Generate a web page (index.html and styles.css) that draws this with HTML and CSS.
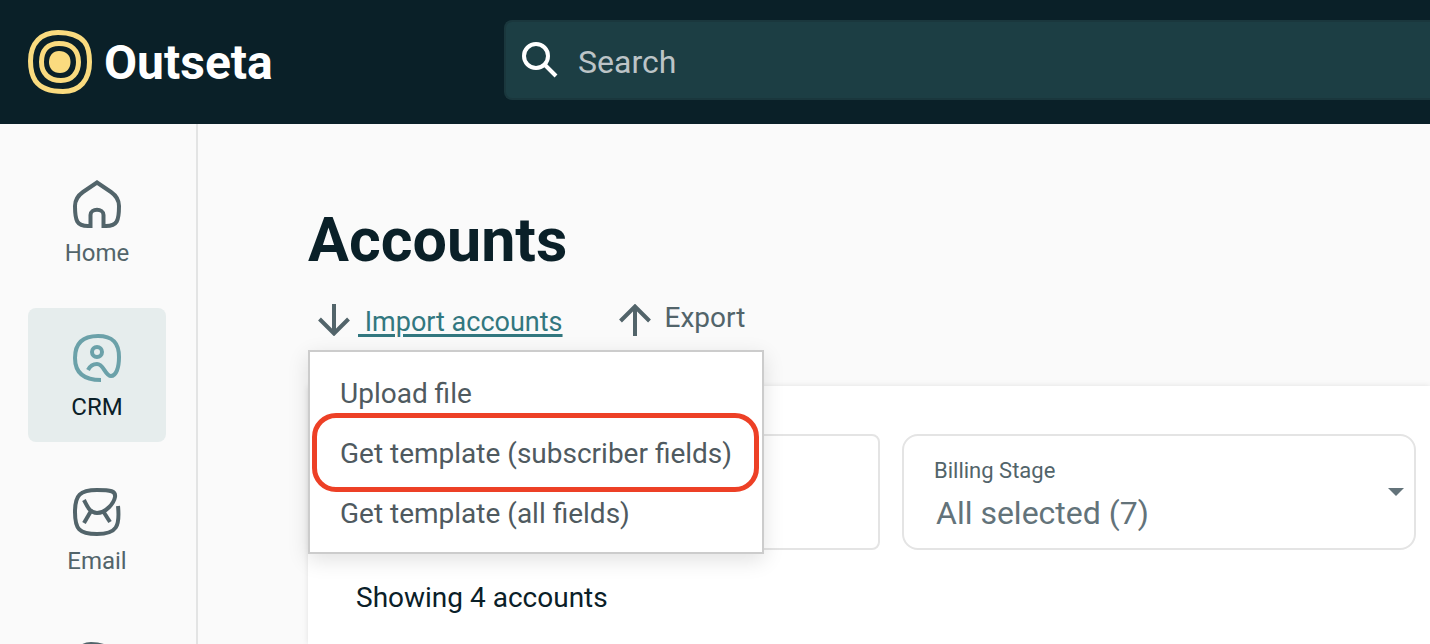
FILE: index.html
```html
<!DOCTYPE html>
<html lang="en">
<head>
    <meta charset="UTF-8">
    <meta name="viewport" content="width=device-width, initial-scale=1.0">
    <title>Accounts - Outseta</title>
    <link rel="stylesheet" href="styles.css">
</head>
<body>
    <header class="topbar">
        <a class="logo" href="#">
            <svg width="64" height="64" viewBox="0 0 64 64" fill="none" stroke="#fadb7f" stroke-width="5">
                <path d="M30 2.500C42 2.500 51 5.500 56.500 12C60.500 17 61.500 25 61.500 32C61.500 50 52 61.500 35 61.500C22 61.500 13 58.500 7.500 51C3.500 45 2.500 38 2.500 31C2.500 13 13 2.500 30 2.500Z"/>
                <path d="M31 13.500C43 13.500 50.500 20 50.500 32C50.500 43 44 50.500 33 50.500C21 50.500 13.500 43.500 13.500 32C13.500 20 20 13.500 31 13.500Z"/>
                <path fill="#fadb7f" stroke="none" d="M31 21C38 21 42.500 25 42.500 32C42.500 38.500 38.500 43 32 43C25 43 21 38.500 21 32C21 25.500 25 21 31 21Z"/>
            </svg>
            <span>Outseta</span>
        </a>
        <div class="search">
            <svg width="36" height="36" viewBox="0 0 36 36" fill="none" stroke="#fff" stroke-width="4">
                <circle cx="14" cy="14" r="12"/>
                <path d="M22.500 22.500L34 34"/>
            </svg>
            <input type="text" placeholder="Search" aria-label="Search">
        </div>
    </header>

    <div class="layout">
        <nav class="sidebar">
            <a class="nav-item" href="#">
                <svg class="nav-icon" viewBox="0 0 48 48">
                    <path d="M24 2.500L38 12C43 15.500 46 19 46 26C46 41 44 46 33 46H30.500V35C30.500 28 17.500 28 17.500 35V46H15C4 46 2 41 2 26C2 19 5 15.500 10 12Z"/>
                </svg>
                <span>Home</span>
            </a>
            <a class="nav-item active" href="#">
                <svg class="nav-icon" viewBox="0 0 48 48">
                    <path d="M28 46C10 46 2 38 2 24C2 9 10 2 25 2C40 2 46 9 46 23C46 34 43 42 38 42C32 42 31 30 24 30C20 30 17 32 15 36"/>
                    <circle cx="24" cy="18" r="5"/>
                </svg>
                <span>CRM</span>
            </a>
            <a class="nav-item" href="#">
                <svg class="nav-icon" viewBox="0 0 48 48">
                    <path d="M45 18C47 38 44 46 24 46C6 46 2 41 2 24C2 7 7 2 24 2C38 2 43 3 42 9C41 15 33 25 24 25C17 25 14 18 11 12"/>
                    <path d="M18 23L11 35"/>
                    <path d="M30 23L37 34"/>
                </svg>
                <span>Email</span>
            </a>
            <a class="nav-item" href="#">
                <svg class="nav-icon" viewBox="0 0 48 48">
                    <path d="M18 2C8 2 2 9 2 22C2 38 8 46 24 46C40 46 46 38 46 24C46 9 32 2 18 2Z"/>
                </svg>
            </a>
        </nav>

        <main class="content">
            <h1>Accounts</h1>

            <div class="actions">
                <div class="import">
                    <svg class="arrow" viewBox="0 0 32 32">
                        <path d="M16 0V30M1.500 15L16 29.500L30.500 15"/>
                    </svg>
                    <a class="import-link" href="#">&nbsp;Import accounts</a>
                    <ul class="menu">
                        <li><a href="#">Upload file</a></li>
                        <li class="highlight"><a href="#">Get template (subscriber fields)</a></li>
                        <li><a href="#">Get template (all fields)</a></li>
                    </ul>
                </div>
                <button type="button" class="export">
                    <svg class="arrow" viewBox="0 0 32 32">
                        <path d="M16 32V2M1.500 17L16 2.500L30.500 17"/>
                    </svg>
                    <span>Export</span>
                </button>
            </div>

            <section class="card">
                <div class="filters">
                    <input class="filter-search" type="text" aria-label="Search accounts">
                    <div class="filter-select">
                        <div class="filter-field">
                            <label for="billing-stage">Billing Stage</label>
                            <select id="billing-stage">
                                <option>All selected (7)</option>
                            </select>
                        </div>
                        <svg width="16" height="8" viewBox="0 0 16 8">
                            <path d="M0 0H16L8 8Z" fill="#63737a"/>
                        </svg>
                    </div>
                </div>
                <p class="count">Showing 4 accounts</p>
            </section>
        </main>
    </div>
</body>
</html>
```

FILE: styles.css
```css
* {
    box-sizing: border-box;
}

body {
    margin: 0;
    height: 100vh;
    display: flex;
    flex-direction: column;
    overflow: hidden;
    background-color: #fafafa;
    color: #0a2028;
    font-family: Roboto, "Liberation Sans", Arial, sans-serif;
    font-size: 28px;
}

a {
    color: inherit;
    text-decoration: none;
}

/* Top bar */
.topbar {
    display: flex;
    flex: none;
    height: 124px;
    padding: 20px 0 24px 28px;
    background-color: #0a2028;
}

.logo {
    display: flex;
    align-items: center;
    gap: 12px;
    width: 476px;
    padding-top: 4px;
    color: #fff;
    font-size: 48px;
    font-weight: 700;
}

.search {
    display: flex;
    flex: 1;
    align-items: center;
    gap: 20px;
    padding-left: 16px;
    border: 2px solid #1a373d;
    border-right: none;
    border-radius: 8px 0 0 8px;
    background-color: #1c3e44;
}

.search input {
    flex: 1;
    padding: 4px 0 0;
    border: none;
    outline: none;
    background: none;
    color: #fff;
    font-family: inherit;
    font-size: 32px;
}

.search input::placeholder {
    color: #bcc4c7;
}

/* Sidebar */
.layout {
    display: flex;
    flex: 1;
    min-height: 0;
}

.sidebar {
    display: flex;
    flex: none;
    flex-direction: column;
    gap: 20px;
    width: 198px;
    padding: 30px 30px 0 28px;
    border-right: 2px solid #e3e4e4;
    overflow: hidden;
}

.nav-item {
    display: flex;
    flex: none;
    flex-direction: column;
    align-items: center;
    gap: 8px;
    height: 134px;
    padding-top: 26px;
    border-radius: 8px;
    color: #52646a;
    font-size: 24px;
    line-height: 34px;
}

.nav-icon {
    width: 48px;
    height: 48px;
    fill: none;
    stroke: #52646a;
    stroke-width: 4;
}

.nav-item.active {
    background-color: #e6eded;
    color: #0a2028;
}

.nav-item.active .nav-icon {
    stroke: #6ba1a9;
}

/* Content */
.content {
    display: flex;
    flex: 1;
    flex-direction: column;
    padding: 80px 0 0 110px;
}

h1 {
    margin: 0;
    font-size: 61px;
    font-weight: 700;
    line-height: 72px;
}

.actions {
    display: flex;
    gap: 56px;
    height: 110px;
    padding: 28px 0 0 10px;
}

.arrow {
    width: 32px;
    height: 32px;
    fill: none;
    stroke: #52646a;
    stroke-width: 4;
}

.import {
    position: relative;
    display: flex;
    align-items: flex-start;
    gap: 8px;
}

.import-link {
    color: #32777f;
    font-size: 27px;
    line-height: 36px;
    text-decoration: underline;
    text-decoration-thickness: 3px;
    text-underline-offset: 3px;
}

.export {
    display: flex;
    align-items: flex-start;
    gap: 14px;
    height: 36px;
    padding: 0;
    border: none;
    background: none;
    color: #52646a;
    font-family: inherit;
    font-size: 28px;
    line-height: 28px;
    cursor: pointer;
}

.menu {
    position: absolute;
    top: 46px;
    left: -10px;
    z-index: 1;
    width: 456px;
    margin: 0;
    padding: 12px 0 8px;
    border: 2px solid #ccc;
    background-color: #fff;
    box-shadow: 0 6px 20px rgba(0, 0, 0, 0.12);
    color: #4f5a60;
    line-height: 60px;
    list-style: none;
}

.menu a {
    display: block;
    padding-left: 30px;
}

.highlight {
    position: relative;
}

.highlight::after {
    content: "";
    position: absolute;
    inset: -11px 3px -8px 2px;
    border: 5px solid #ed4026;
    border-radius: 24px;
    pointer-events: none;
}

/* Card */
.card {
    flex: 1;
    padding: 48px 14px 0 48px;
    background-color: #fff;
    box-shadow: 0 0 6px rgba(0, 0, 0, 0.1);
}

.filters {
    display: grid;
    grid-template-columns: 1fr 1fr;
    gap: 22px;
    height: 116px;
    padding-left: 10px;
}

.filter-search,
.filter-select {
    min-width: 0;
    border: 2px solid #e4e4e4;
    background-color: #fff;
}

.filter-search {
    border-radius: 8px;
}

.filter-select {
    display: flex;
    align-items: center;
    padding: 0 10px 0 30px;
    border-radius: 16px;
}

.filter-field {
    display: flex;
    flex: 1;
    flex-direction: column;
    gap: 8px;
    padding-top: 6px;
    color: #52646a;
    font-size: 22px;
    line-height: 28px;
}

.filter-field select {
    appearance: none;
    padding: 0 2px;
    border: none;
    outline: none;
    background: none;
    color: #63737a;
    font-family: inherit;
    font-size: 32px;
    line-height: 40px;
}

.count {
    margin: 28px 0 0;
    line-height: 40px;
}
```
